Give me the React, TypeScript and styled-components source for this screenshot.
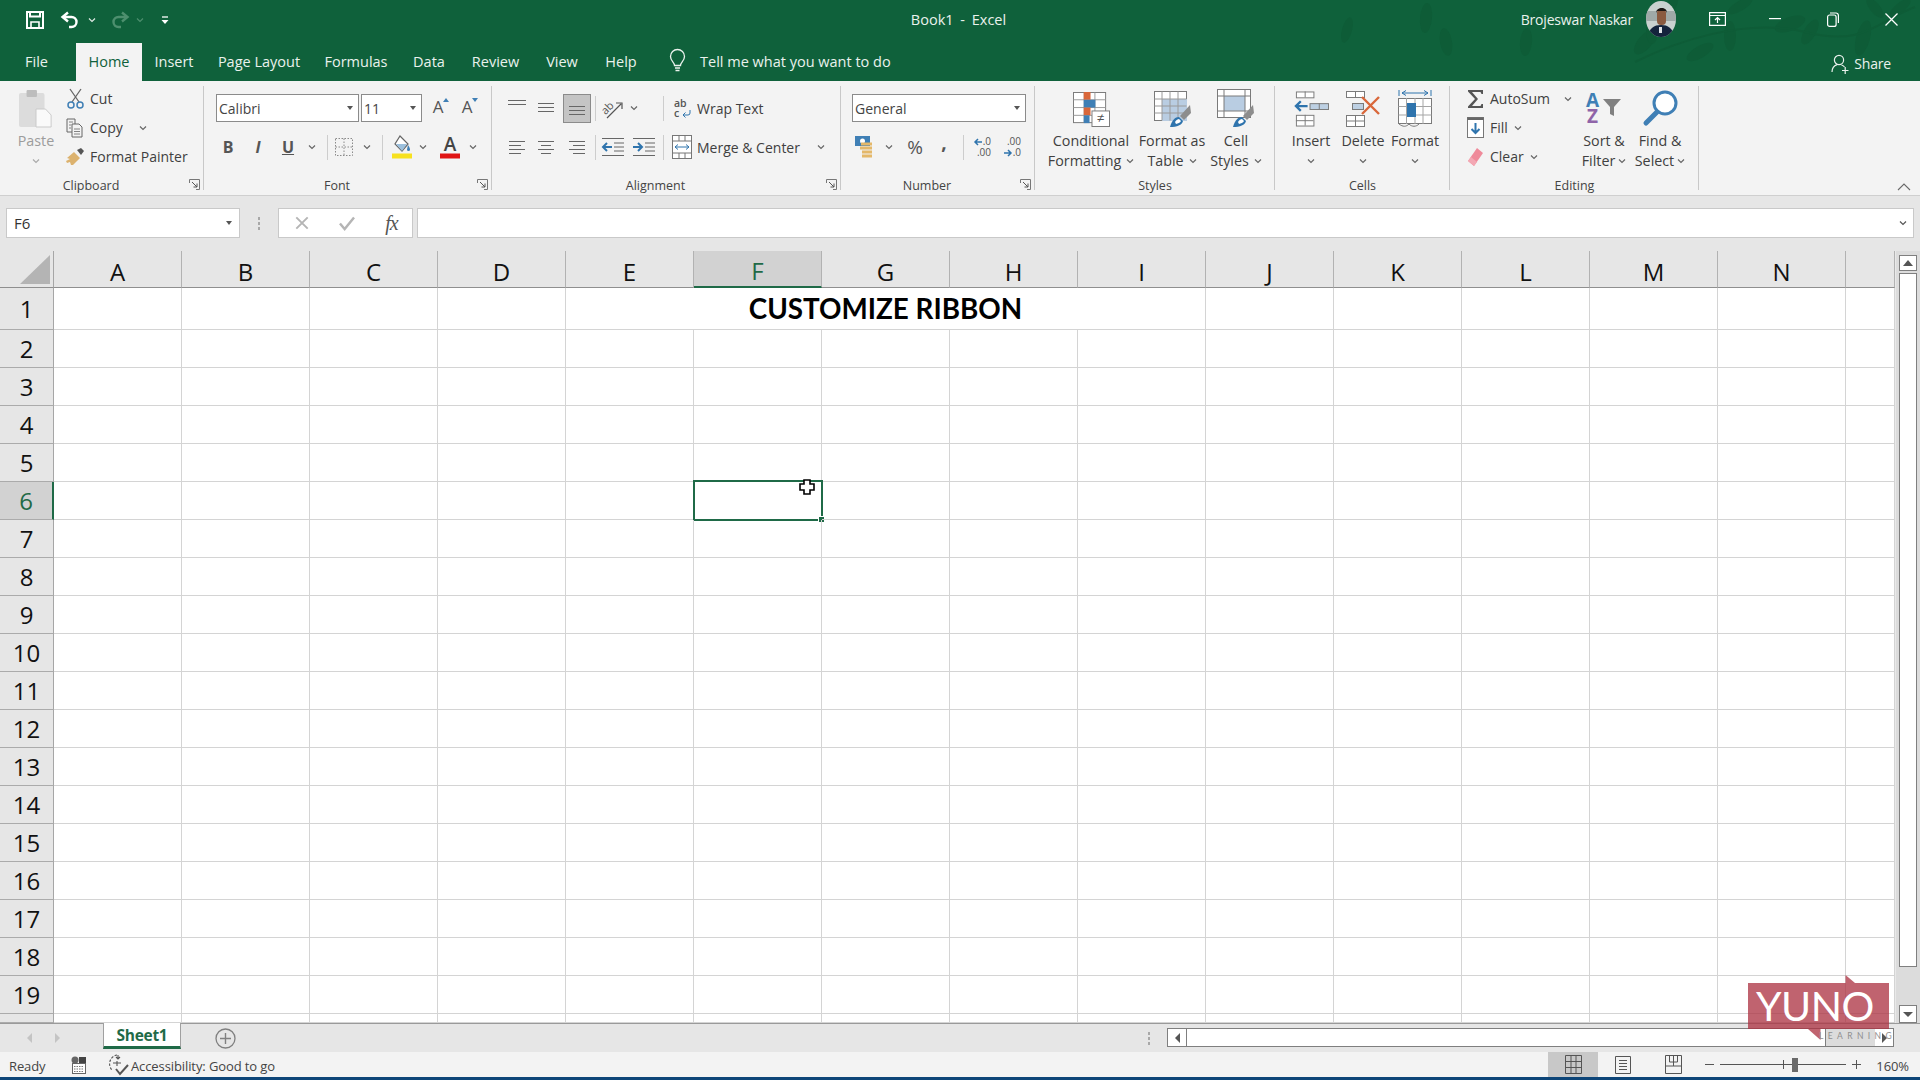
import React from 'react';
import styled, { createGlobalStyle } from 'styled-components';

const UI = `'Open Sans','Noto Sans',sans-serif`;
const GREEN = '#0f613b';
const TEXT = '#404040';

const Global = createGlobalStyle`
  html, body { margin: 0; width: 1920px; height: 1080px; overflow: hidden; background: #fff; }
  * { box-sizing: border-box; }
  svg { display: block; flex: none; overflow: visible; }
`;

const Window = styled.div`
  width: 1920px; height: 1080px; display: flex; flex-direction: column; overflow: hidden;
  font-family: ${UI}; font-size: 14px; color: ${TEXT}; position: relative;
`;
const Slot = styled.div<{ $w: number; $ml?: number }>`
  width: ${p => p.$w}px; margin-left: ${p => p.$ml || 0}px; flex: none;
  display: flex; align-items: center; justify-content: center; height: 100%;
`;
const TitleBar = styled.header`
  height: 43px; background: ${GREEN}; color: #fff; display: grid; grid-template-columns: 1fr auto 1fr;
  align-items: center; position: relative;
`;
const Leaves = styled.svg`position: absolute; left: 1300px; top: 0;`;
const Qat = styled.div`display: flex; height: 100%; padding: 0 0 3px 24px; align-items: center;`;
const DocTitle = styled.div`font-size: 14.5px; word-spacing: 3px; margin: 0 0 4px -3px; color: #eaf2ed; z-index: 1;`;
const WinArea = styled.div`display: flex; align-items: center; height: 100%; justify-content: flex-end; padding: 0 0 5px 0; z-index: 1;`;
const UserName = styled.span`font-size: 14px; letter-spacing: -.17px; color: #eaf2ed; margin-right: 13px;`;
const TabRow = styled.nav`height: 38px; background: ${GREEN}; display: flex; align-items: stretch;`;
const Tab = styled.div<{ $w: number; $active?: boolean; $ml?: number }>`
  width: ${p => p.$w}px; margin-left: ${p => p.$ml || 0}px; display: flex; align-items: center; justify-content: center;
  font-size: 14.5px; padding-bottom: 2px;
  background: ${p => (p.$active ? '#f3f3f3' : 'transparent')}; color: ${p => (p.$active ? GREEN : '#eaf2ed')};
`;
const TellMe = styled.div`display: flex; align-items: center; margin-left: 18px; gap: 14px; color: #eaf2ed; font-size: 14.5px; padding-bottom: 2px;`;
const Share = styled.div`display: flex; align-items: center; margin: 3px 29px 0 auto; gap: 5px; color: #eaf2ed; font-size: 14px; letter-spacing: -.2px;`;

const Ribbon = styled.section`height: 115px; background: #f3f3f3; border-bottom: 1px solid #cfcfcf; display: flex; position: relative;`;
const Group = styled.div<{ $w: number }>`
  width: ${p => p.$w}px; display: flex; flex-direction: column; position: relative; flex: none;
  &::after { content: ''; position: absolute; right: 0; top: 5px; bottom: 5px; width: 1px; background: #c8c8c8; }
`;
const GroupBody = styled.div<{ $pl?: number }>`flex: 1; display: flex; padding-left: ${p => p.$pl || 0}px; min-height: 0;`;
const GroupLabel = styled.div<{ $launcher?: boolean }>`
  height: 19px; display: flex; align-items: center; justify-content: center; font-size: 12.5px; color: #444;
  padding-right: ${p => (p.$launcher ? 22 : 0)}px;
`;
const LauncherBox = styled.div`position: absolute; right: 4px; bottom: 5px;`;
const Collapse = styled.div`position: absolute; left: 1897px; top: 102px;`;
const Stack = styled.div<{ $ml?: number }>`display: flex; flex-direction: column; padding-top: 3px; margin-left: ${p => p.$ml || 0}px;`;
const SmallBtn = styled.div<{ $w?: number }>`display: flex; align-items: center; height: 29px; font-size: 14px; white-space: nowrap; ${p => (p.$w ? `width:${p.$w}px;` : '')}`;
const SmallIcon = styled.div`width: 22px; display: flex; justify-content: center; margin-right: 4px;`;
const ChevWrap = styled.span<{ $ml?: number }>`display: inline-flex; margin-left: ${p => p.$ml ?? 6}px; vertical-align: middle;`;
const Rows = styled.div<{ $pl: number }>`display: flex; flex-direction: column; gap: 11px; padding: 13px 0 0 ${p => p.$pl}px;`;
const Row = styled.div`display: flex; align-items: center; height: 28px;`;
const Select = styled.div<{ $w: number; $ml?: number }>`
  width: ${p => p.$w}px; margin-left: ${p => p.$ml || 0}px; height: 28px; background: #fff; border: 1px solid #8b8b8b; position: relative; flex: none;
  font-size: 14px; display: flex; align-items: center; padding-left: 2px; justify-content: space-between; padding-right: 5px; color: #444;
`;
const Caret = styled.i`width: 0; height: 0; border-left: 3.5px solid transparent; border-right: 3.5px solid transparent; border-top: 4px solid #555;`;
const Sep = styled.div`width: 1px; height: 25px; background: #cdcdcd;`;
const Active = styled.div`width: 28px; height: 29px; background: #c4c4c4; border: 1px solid #8b8b8b; display: flex; align-items: center; justify-content: center;`;
const Letter = styled.span<{ $b?: boolean; $i?: boolean; $u?: boolean; $s?: number; $c?: string; $y?: number }>`
  font-size: ${p => p.$s || 16}px; font-weight: ${p => (p.$b ? 700 : 400)}; font-style: ${p => (p.$i ? 'italic' : 'normal')};
  text-decoration: ${p => (p.$u ? 'underline' : 'none')}; color: ${p => p.$c || '#555'}; line-height: 1;
  transform: translateY(${p => p.$y || 0}px);
`;
const LetterIcon = styled.div`display: flex; align-items: flex-start; height: 20px;`;
const Big = styled.div<{ $w: number }>`width: ${p => p.$w}px; flex: none; display: flex; flex-direction: column; align-items: center; padding-top: 3px;`;
const BigIcon = styled.div`height: 47px; display: flex; align-items: flex-end; justify-content: center; padding-bottom: 4px;`;
const BigText = styled.div<{ $dim?: boolean }>`
  line-height: 20px; height: 20px; font-size: 14.3px; white-space: nowrap; text-align: center; display: flex; align-items: center;
  color: ${p => (p.$dim ? '#9c9c9c' : TEXT)};
`;

const FormulaBar = styled.div`height: 55px; background: #e6e6e6; display: flex; padding: 12px 6px 0 6px; align-items: flex-start;`;
const FieldBox = styled.div<{ $w?: number; $end?: boolean }>`
  height: 30px; background: #fff; border: 1px solid #c9c9c9; display: flex; align-items: center; ${p => (p.$w ? `width:${p.$w}px;flex:none;` : 'flex:1;margin-left:4px;')}
  ${p => (p.$end ? 'justify-content:flex-end;padding-right:6px;' : '')}
`;
const NameText = styled.span`font-size: 15px; margin-left: 7px; flex: 1; color: #333;`;
const Dots = styled.div`width: 38px; flex: none; height: 30px; display: flex; align-items: center; justify-content: center; flex-direction: column; gap: 2px;`;
const Fx = styled.span`font-family: 'Liberation Serif', serif; font-style: italic; font-size: 20px; color: #555; letter-spacing: -1px;`;

const Body = styled.div`height: 772px; display: flex;`;
const Sheet = styled.div`
  width: 1895px; display: grid; flex: none; background: #fff;
  grid-template-columns: 54px repeat(14, 128px) 1fr;
  grid-template-rows: 37px 42px repeat(18, 38px) 9px;
`;
const Corner = styled.div`background: #e6e6e6; border-right: 1px solid #a6a6a6; border-bottom: 1px solid #8f8f8f; display: flex; justify-content: flex-end; align-items: flex-end; padding: 0 3px 3px 0;`;
const ColHead = styled.div<{ $on?: boolean }>`
  background: ${p => (p.$on ? '#d2d2d2' : '#e6e6e6')}; color: ${p => (p.$on ? '#1f6a47' : '#111')};
  border-right: 1px solid #b2b2b2; border-bottom: ${p => (p.$on ? '2px solid #1f6a47' : '1px solid #8f8f8f')};
  display: flex; align-items: center; justify-content: center; font-size: 24px; line-height: 1; padding-top: 5px;
`;
const RowHead = styled.div<{ $on?: boolean }>`
  background: ${p => (p.$on ? '#d2d2d2' : '#e6e6e6')}; color: ${p => (p.$on ? '#1f6a47' : '#111')};
  border-right: ${p => (p.$on ? '2px solid #1f6a47' : '1px solid #a6a6a6')}; border-bottom: 1px solid #ababab;
  display: flex; align-items: center; justify-content: center; font-size: 24px; line-height: 1; padding-top: 1px;
`;
const Cell = styled.div<{ $span?: number }>`
  border-right: 1px solid #d4d4d4; border-bottom: 1px solid #d4d4d4; position: relative; min-width: 0;
  ${p => (p.$span ? `grid-column: span ${p.$span}; display:flex; align-items:center; justify-content:center; padding-top:1px;` : '')}
`;
const Heading = styled.span`font-family: Lato, 'Open Sans', sans-serif; font-weight: 700; font-size: 27.8px; color: #000; line-height: 1; white-space: nowrap;`;
const Selection = styled.div`position: absolute; left: -1.5px; top: -2px; right: -1.5px; bottom: -2px; border: 2px solid #1f6a47;`;
const Handle = styled.i`position: absolute; right: -4px; bottom: -4px; width: 7px; height: 7px; background: #1f6a47; border: 1px solid #fff;`;
const Pointer = styled.div`position: absolute; left: 105px; top: -3px; z-index: 2;`;

const VScroll = styled.div`flex: 1; background: #dcdcdc; display: flex; flex-direction: column; padding: 4px 3px 0 3px; border-left: 1px solid #e9e9e9;`;
const ScrollBtn = styled.div<{ $mt?: number; $h?: number }>`
  background: #fff; border: 1px solid #7f7f7f; display: flex; align-items: center; justify-content: center;
  height: ${p => p.$h}px; margin-top: ${p => p.$mt || 0}px; flex: none;
`;

const TabBar = styled.div`height: 29px; background: #e6e6e6; border-top: 1px solid #9a9a9a; display: flex; flex: none;`;
const Nav = styled.div`width: 103px; flex: none; display: flex; align-items: center; padding: 0 0 0 26px; gap: 21px;`;
const SheetTab = styled.div`
  width: 78px; flex: none; height: 26px; background: #fff; border-left: 1px solid #a0a0a0; border-right: 1px solid #a0a0a0; border-bottom: 3px solid #1f6a47;
  margin-top: -1px; font-weight: 700; font-size: 15.5px; letter-spacing: -.3px; color: #1f6a47; display: flex; align-items: center; justify-content: center;
`;
const HScroll = styled.div`
  position: relative; margin: 4px 26px 0 0; width: 727px; height: 19px; border: 1px solid #7f7f7f; background: #dcdcdc; display: flex; flex: none;
`;
const HEnd = styled.div`width: 18px; flex: none; background: #fff; display: flex; align-items: center; justify-content: center;`;
const HThumb = styled.div`width: 640px; flex: none; background: #fff; border-left: 1px solid #7f7f7f; border-right: 1px solid #7f7f7f;`;
const Spacer = styled.div`flex: 1;`;
const Grips = styled.div`width: 10px; margin-right: 13px; margin-top: 8px; display: flex; flex-direction: column; align-items: center; gap: 2px;`;
const Grip = styled.i`width: 2px; height: 3px; background: #a8a8a8; display: block;`;

const Status = styled.footer`height: 25px; background: #f3f3f3; display: flex; align-items: center; font-size: 13px; letter-spacing: -.1px; flex: none; color: #444;`;
const StatusText = styled.span<{ $ml: number; $w?: number }>`margin-left: ${p => p.$ml}px; padding-top: 2px; ${p => (p.$w ? `width:${p.$w}px;` : '')}`;
const Strip = styled.div`height: 3px; background: #0d4578; flex: none;`;
const ViewBtn = styled.div<{ $on?: boolean }>`width: 50px; height: 100%; display: flex; align-items: center; justify-content: center; background: ${p => (p.$on ? '#c8c8c8' : 'transparent')};`;
const Slider = styled.div`width: 126px; height: 100%; position: relative; display: flex; align-items: center;`;
const SliderLine = styled.div`height: 1px; background: #555; width: 100%;`;
const SliderTick = styled.i`position: absolute; left: 63px; top: 8px; width: 1px; height: 9px; background: #555;`;
const SliderThumb = styled.i`position: absolute; left: 72px; top: 6px; width: 6px; height: 14px; background: #6a6a6a;`;
const Pct = styled.span`margin-left: 9px; margin-right: 11px; font-size: 13px; padding-top: 2px;`;

const Logo = styled.div`position: absolute; left: 1745px; top: 972px; width: 150px; height: 72px; z-index: 5; pointer-events: none;`;
const LogoWord = styled.div`position: absolute; left: 11px; top: 12px; color: #fff; font-family: Lato, sans-serif; font-size: 41px; letter-spacing: -.5px; line-height: 44px; white-space: nowrap;`;
const LogoSub = styled.div`position: absolute; left: 74px; top: 59px; color: #8f8f8f; font-family: Lato, sans-serif; font-size: 8.5px; letter-spacing: 4.4px; white-space: nowrap;`;

/* ---------- drawings ---------- */
const Chev: React.FC<{ c?: string }> = ({ c = '#666' }) => (
  <svg width="8" height="6" viewBox="0 0 8 6"><path d="M1 1.5 4 4.5 7 1.5" stroke={c} strokeWidth="1.2" fill="none" /></svg>
);
const Launcher = () => (
  <svg width="11" height="11" viewBox="0 0 11 11" fill="none"><path d="M.5 4V.5h10v10H7" stroke="#777" /><path d="M3 3l5 5M8 4.5V8H4.5" stroke="#555" /></svg>
);
const W = '#fff';
const Save = () => (<svg width="18" height="18" viewBox="0 0 18 18" fill="none" stroke={W} strokeWidth="2"><path d="M1 1h16v16H1z" /><path d="M4 1v4.5h10V1" /><path d="M5 17v-6h8v6" strokeWidth="1.6" /></svg>);
const Undo = ({ c = W }: { c?: string }) => (<svg width="20" height="18" viewBox="0 0 20 18" fill="none" stroke={c} strokeWidth="2.4"><path d="M8 1.5 2.5 6 8 10.5" /><path d="M3 6h8.5a4.6 4.6 0 0 1 0 10H9" /></svg>);
const Redo = () => (<svg width="20" height="18" viewBox="0 0 20 18" fill="none" stroke="#4d8f6e" strokeWidth="2.4"><path d="M12 1.5 17.5 6 12 10.5" /><path d="M17 6H8.5a4.6 4.6 0 0 0 0 10H11" /></svg>);
const Custom = () => (<svg width="8" height="9" viewBox="0 0 8 9"><path d="M1 1h6" stroke={W} strokeWidth="1.3" /><path d="M.5 4h7L4 8z" fill={W} /></svg>);
const LeavesArt = () => (
  <Leaves width="620" height="81" viewBox="0 0 620 81" fill="#0e5c37">
    {[[47, 30, 5, 13, 15], [126, 18, 6, 15, 5], [146, 42, 6, 14, -10], [226, 42, 6, 14, 5], [235, 18, 5, 9, 40], [345, 42, 7, 15, 40], [352, 30, 6, 14, 0], [400, 52, 6, 15, 60], [430, 36, 6, 15, 0], [490, 24, 7, 16, 70], [510, 32, 6, 14, 30], [563, 38, 7, 18, 15], [600, 8, 5, 13, 50], [575, 8, 5, 12, -40], [440, 6, 5, 14, 60], [370, 8, 5, 14, 30]].map(([x, y, a, b, r], i) => (
      <ellipse key={i} cx={x} cy={y} rx={a} ry={b} transform={`rotate(${r} ${x} ${y})`} />
    ))}
    <path d="M335 62c40-20 110-45 170-30s70-10 110-25" stroke="#0e5c37" strokeWidth="2" fill="none" />
  </Leaves>
);
const Avatar = () => (
  <svg width="30" height="36" viewBox="0 0 30 36">
    <defs><clipPath id="av"><ellipse cx="15" cy="18" rx="15" ry="18" /></clipPath></defs>
    <g clipPath="url(#av)">
      <rect width="30" height="36" fill="#c9d1cf" />
      <rect y="10" width="30" height="10" fill="#9fa9a8" />
      <path d="M2 36c1-9 6-12 13-12s12 3 13 12z" fill="#14233c" />
      <rect x="11" y="8" width="9" height="16" rx="4" fill="#8a5a40" />
      <path d="M10 12c0-6 11-7 11 0l-1-2h-9z" fill="#1c1714" />
      <rect x="13" y="26" width="3" height="6" fill="#dfe3e6" />
    </g>
  </svg>
);
const Bulb = () => (<svg width="17" height="24" viewBox="0 0 17 24" fill="none" stroke="#eaf2ed" strokeWidth="1.3"><path d="M5.5 16.5c0-3-4-4.500-4-9a7 7 0 0 1 14 0c0 4.500-4 6-4 9z" /><path d="M6 19h5M6.500 21.500h4" /></svg>);
const Person = () => (<svg width="18" height="20" viewBox="0 0 18 20" fill="none" stroke="#eaf2ed" strokeWidth="1.2"><circle cx="8" cy="6" r="4.600" /><path d="M1 18c0-4 2.500-6.500 5-7.400M10.500 11c1.300.5 2.300 1 3 2M11 16.500h6.500M14.200 13v7" /></svg>);
const DispOpts = () => (<svg width="17" height="14" viewBox="0 0 17 14" fill="none" stroke="#fff" strokeWidth="1.200"><path d="M.6.6h15.800v12.800H.6zM.6 3.500h15.800" /><path d="M8.500 11V6M6 8l2.500-2.500L11 8" /></svg>);
const MinBtn = () => (<svg width="12" height="2"><rect width="12" height="1.200" fill="#fff" /></svg>);
const RestoreBtn = () => (<svg width="12" height="15" viewBox="0 0 12 15" fill="none" stroke="#fff" strokeWidth="1.200"><rect x=".6" y="3" width="8.500" height="11.400" rx="2" /><path d="M3 1h6a2.400 2.400 0 0 1 2.400 2.400V11" /></svg>);
const CloseBtn = () => (<svg width="13" height="13" viewBox="0 0 13 13" stroke="#fff" strokeWidth="1.300"><path d="M.5.500l12 12M12.500.500l-12 12" /></svg>);
const PasteIcon = () => (
  <svg width="34" height="38" viewBox="0 0 36 38" fill="none" preserveAspectRatio="none">
    <rect x="0" y="4" width="27" height="34" rx="2" fill="#dcdcdc" />
    <rect x="8" y="1" width="11" height="7" rx="1" fill="#bdbdbd" />
    <path d="M18 20h10l6 6v12H18z" fill="#fafafa" stroke="#c9c9c9" />
  </svg>
);
const Cut = () => (
  <svg width="17" height="20" viewBox="0 0 17 20" fill="none">
    <path d="M3 0l9 13M14 0 5 13" stroke="#666" strokeWidth="1.300" />
    <circle cx="4" cy="16" r="3" stroke="#3f7fb5" strokeWidth="1.500" /><circle cx="13" cy="16" r="3" stroke="#3f7fb5" strokeWidth="1.500" />
  </svg>
);
const Copy = () => (
  <svg width="18" height="20" viewBox="0 0 18 20" fill="none" stroke="#666"><path d="M1 1h8v13H1z" /><path d="M6 6h7l3 3v10H6z" fill="#f3f3f3" /><path d="M3 4h4M3 7h2M3 10h2M8 11h6M8 13.500h6M8 16h6" strokeWidth=".8" /></svg>
);
const Painter = () => (
  <svg width="18" height="18" viewBox="0 0 18 18"><path d="M11 2l4-2 3 3-3 4z" fill="#555" /><path d="M8 4l6 6-3 3-4 4H5l-1-3-3 1-1-2 4-2-3-1z" fill="#dcb26e" /></svg>
);
const GrowA = ({ up }: { up?: boolean }) => (
  <LetterIcon>
    <Letter $s={17} $c="#555">A</Letter>
    <svg width="6" height="4" viewBox="0 0 6 4"><path d={up ? 'M0 4h6L3 0z' : 'M0 0h6L3 4z'} fill="#3f7fb5" /></svg>
  </LetterIcon>
);
const BordersIcon = () => (<svg width="18" height="18" viewBox="0 0 18 18" fill="none" stroke="#8a8a8a" strokeDasharray="1.500 1.500"><path d="M.5.500h17v17H.5zM9 .5v17M.5 9h17" /></svg>);
const FillIcon = () => (
  <svg width="20" height="24" viewBox="0 0 20 24" fill="none">
    <path d="M8 1l8 8-6 7-7-7z" fill="#fff" stroke="#666" strokeWidth="1.200" /><path d="M4 9h11l-5 7z" fill="#9cc0dd" /><path d="M16 10c1.500 2 2 3.500 2 4.500a1.500 1.500 0 0 1-3 0" fill="#3f7fb5" />
    <rect x="0" y="18.500" width="20" height="5" fill="#f7e11f" />
  </svg>
);
const ColorA = () => (
  <svg width="20" height="24" viewBox="0 0 20 24"><text x="10" y="16" textAnchor="middle" fontFamily="Open Sans, sans-serif" fontWeight="600" fontSize="19" fill="#444">A</text><rect y="18.500" width="20" height="5" fill="#e01414" /></svg>
);
const Lines = ({ l, w = 22, h = 20 }: { l: number[][]; w?: number; h?: number }) => (
  <svg width={w} height={h} viewBox={`0 0 ${w} ${h}`} stroke="#666" strokeWidth="1">
    {l.map(([a, b, y], i) => <path key={i} d={`M${a} ${y + .5}H${b}`} />)}
  </svg>
);
const Orient = () => (
  <svg width="22" height="22" viewBox="0 0 22 22" fill="none">
    <text transform="rotate(-45 8 12)" x="1" y="14" fontFamily="Open Sans, sans-serif" fontSize="11" fill="#555">ab</text>
    <path d="M6 21 20 7M15 6h6v6" stroke="#555" strokeWidth="1.200" />
  </svg>
);
const Indent = ({ right }: { right?: boolean }) => (
  <svg width="22" height="20" viewBox="0 0 22 20" fill="none">
    <path d="M0 1.500h22M0 18.500h22M12 6h10M12 10h10M12 14h10" stroke="#666" />
    <path d={right ? 'M0 10h8M5 6l4 4-4 4' : 'M10 10H2M5 6l-4 4 4 4'} stroke="#2f74ad" strokeWidth="2" />
  </svg>
);
const WrapIcon = () => (
  <svg width="18" height="20" viewBox="0 0 18 20">
    <text x="1" y="9" fontFamily="Open Sans, sans-serif" fontSize="10.500" fill="#555" fontWeight="600">ab</text>
    <text x="1" y="19" fontFamily="Open Sans, sans-serif" fontSize="10.500" fill="#555" fontWeight="600">c</text>
    <path d="M17 12v3a2 2 0 0 1-2 2H10M12.500 14.500 10 17l2.500 2.500" stroke="#2f74ad" fill="none" />
  </svg>
);
const MergeIcon = () => (
  <svg width="20" height="24" viewBox="0 0 20 24" fill="none">
    <rect x=".5" y=".5" width="19" height="23" fill="#fff" stroke="#777" /><path d="M.5 6h19M.5 18h19M7 .5V6M13 .5V6M7 18v5.500M13 18v5.500" stroke="#777" />
    <path d="M3 12h14M6 9.500 3 12l3 2.500M14 9.500l3 2.500-3 2.500" stroke="#2f74ad" />
  </svg>
);
const Accounting = () => (
  <svg width="20" height="24" viewBox="0 0 20 24">
    <rect x="0" y="1" width="15" height="10" fill="#3f7fb5" /><circle cx="7.500" cy="6" r="2.500" fill="#fff" />
    <path d="M6 9h11M5 13h12M7 17h10M7 21h10" stroke="#e4b86a" strokeWidth="3" />
  </svg>
);
const Dec = ({ a, b, left }: { a: string; b: string; left?: boolean }) => (
  <svg width="20" height="22" viewBox="0 0 20 22">
    <text x="19" y="9" textAnchor="end" fontFamily="Open Sans, sans-serif" fontSize="10" fill="#555">{a}</text>
    <text x="19" y="20" textAnchor="end" fontFamily="Open Sans, sans-serif" fontSize="10" fill="#555">{b}</text>
    <path d={left ? 'M10 6H3M6 3 3 6l3 3' : 'M2 17h7M6 14l3 3-3 3'} stroke="#2f74ad" strokeWidth="1.500" fill="none" />
  </svg>
);
const G = '#7a7a7a';
const CondIcon = () => (
  <svg width="37" height="35" viewBox="0 0 38 36" fill="none" preserveAspectRatio="none">
    <rect x=".5" y=".5" width="33" height="31" fill="#fff" stroke={G} /><path d="M.5 8h33M.5 16h33M.5 24h33M11.500 .5v31M22.500 .5v31" stroke="#9a9a9a" />
    <rect x="11" y="0" width="7" height="8" fill="#d9673a" /><rect x="11" y="8" width="12" height="8" fill="#3f7fb5" /><rect x="11" y="16" width="7" height="8" fill="#d9673a" /><rect x="11" y="24" width="6" height="8" fill="#3f7fb5" />
    <rect x="19.500" y="19.500" width="18" height="16" fill="#fff" stroke={G} />
    <text x="28.500" y="32" textAnchor="middle" fontFamily="Open Sans, sans-serif" fontSize="14" fill="#555">≠</text>
  </svg>
);
const Brush = ({ x, y }: { x: number; y: number }) => (
  <g transform={`translate(${x} ${y})`}>
    <path d="M0 17c2-7 5-10 9-10l4 4c-1 4-6 6-13 6z" fill="#2f74ad" /><path d="M5 12c1-2 3-3 4-3l2 2c-1 2-3 2-5 3z" fill="#fff" />
    <path d="M10 6l4 4 7-7-1-8z" fill="#8d8d8d" />
  </g>
);
const TableIcon = () => (
  <svg width="37" height="36" viewBox="0 0 37 36" fill="none">
    <rect x=".5" y=".5" width="32" height="29" fill="#fff" stroke={G} /><rect x="8" y="8" width="25" height="22" fill="#b9cde2" />
    <path d="M.5 8h32M.5 15h32M.5 22h32M8 .5v29M16 .5v29M24 .5v29" stroke="#9a9a9a" />
    <Brush x={16} y={19} />
  </svg>
);
const StylesIcon = () => (
  <svg width="38" height="38" viewBox="0 0 38 38" fill="none">
    <rect x=".5" y=".5" width="33" height="28" fill="#fff" stroke={G} /><rect x="7" y="7" width="21" height="15" fill="#b9cde2" />
    <path d="M.5 7h33M.5 22h33M7 .5v28M28 .5v28" stroke={G} />
    <Brush x={16} y={21} />
  </svg>
);
const Mini = ({ x, y, w, h, f = '#fff', rows = 1, cols = 2 }: { x: number; y: number; w: number; h: number; f?: string; rows?: number; cols?: number }) => (
  <g>
    <rect x={x + .5} y={y + .5} width={w} height={h} fill={f} stroke={G} />
    {Array.from({ length: cols - 1 }, (_, i) => <path key={i} d={`M${x + .5 + (w * (i + 1)) / cols} ${y}v${h}`} stroke={G} />)}
    {Array.from({ length: rows - 1 }, (_, i) => <path key={i} d={`M${x} ${y + .5 + (h * (i + 1)) / rows}h${w}`} stroke={G} />)}
  </g>
);
const InsertIcon = () => (
  <svg width="36" height="36" viewBox="0 0 37 36" fill="none">
    <Mini x={3} y={0} w={18} h={6} /><Mini x={17} y={12} w={19} h={6} f="#bdd0e3" /><Mini x={3} y={24} w={18} h={11} rows={2} />
    <path d="M15 15H3M8 10l-5 5 5 5" stroke="#2f74ad" strokeWidth="2.400" />
  </svg>
);
const DeleteIcon = () => (
  <svg width="36" height="36" viewBox="0 0 36 36" fill="none">
    <Mini x={1} y={0} w={18} h={6} /><Mini x={7} y={12} w={11} h={6} f="#bdd0e3" cols={1} /><Mini x={1} y={24} w={18} h={11} rows={2} />
    <path d="M17 6l17 17M34 6 17 23" stroke="#d9673a" strokeWidth="2.400" />
  </svg>
);
const FormatIcon = () => (
  <svg width="34" height="37" viewBox="0 0 34 37" fill="none">
    <path d="M1 0v6M33 0v6M4 3h26M8 .5 4 3l4 2.500M26 .5 30 3l-4 2.500" stroke="#2f74ad" />
    <rect x=".5" y="8.500" width="33" height="25" fill="#fff" stroke={G} /><path d="M.5 16.500h33M.5 25h33M8.500 8v26M25 8v26M17 8v26" stroke="#a5a5a5" />
    <rect x="9" y="13" width="9" height="14" fill="#2f74ad" />
    <path d="M1 34c4 3 7 3 10 0 3 3 7 3 10 0" stroke={G} />
  </svg>
);
const Sigma = () => (<svg width="17" height="20" viewBox="0 0 17 20"><path d="M1 1h15v4h-1.500L13.500 3H5l6 7-6 7h8.500l1-2H16v4H1v-1.500L8 10 1 2.500z" fill="#555" /></svg>);
const FillDown = () => (<svg width="17" height="21" viewBox="0 0 17 21" fill="none"><rect x=".5" y=".5" width="16" height="20" fill="#fff" stroke="#777" /><rect x=".5" y=".5" width="16" height="2.500" fill="#666" /><path d="M8.500 6v10M4.500 12l4 4 4-4" stroke="#2f74ad" strokeWidth="2" /></svg>);
const Eraser = () => (<svg width="18" height="20" viewBox="0 0 18 20"><path d="M11 1l6 5-9 13-6-5z" fill="#ef8a9a" /><path d="M5 10l6 5-3 4-6-5z" fill="#f3a7b3" /></svg>);
const SortIcon = () => (
  <svg width="36" height="35" viewBox="0 0 36 35">
    <text x="0" y="15" fontFamily="Open Sans, sans-serif" fontWeight="700" fontSize="19" fill="#3f7fb5">A</text>
    <text x="1" y="31" fontFamily="Open Sans, sans-serif" fontWeight="700" fontSize="19" fill="#8f64a8">Z</text>
    <path d="M17 7h18l-7 8v9l-4-2v-7z" fill="#808080" />
  </svg>
);
const FindIcon = () => (
  <svg width="35" height="37" viewBox="0 0 35 37" fill="none"><circle cx="22" cy="13" r="11" stroke="#3f7fb5" strokeWidth="3" fill="#fff" /><path d="M14 22 3 33" stroke="#3f7fb5" strokeWidth="5" strokeLinecap="round" /></svg>
);
const Up = ({ c = '#6a6a6a' }: { c?: string }) => (<svg width="14" height="8" viewBox="0 0 14 8"><path d="M1 7 7 1l6 6" stroke={c} strokeWidth="1.100" fill="none" /></svg>);
const Tri = ({ d, c = '#555' }: { d: 'l' | 'r' | 'u' | 'd'; c?: string }) => {
  const p = { l: 'M6 0v10L1 5z', r: 'M1 0v10l5-5z', u: 'M0 7h10L5 1z', d: 'M0 2h10L5 7z' }[d];
  return <svg width={d === 'l' || d === 'r' ? 7 : 10} height={d === 'l' || d === 'r' ? 10 : 8} viewBox={d === 'l' || d === 'r' ? '0 0 7 10' : '0 0 10 8'}><path d={p} fill={c} /></svg>;
};
const CornerTri = () => (<svg width="30" height="29" viewBox="0 0 30 29"><path d="M30 0v29H0z" fill="#b4b4b4" /></svg>);
const CrossCursor = () => (<svg width="16" height="16" viewBox="0 0 16 16"><path d="M5 1h6v4h4v6h-4v4H5v-4H1V5h4z" fill="#fff" stroke="#000" strokeWidth="1.600" /></svg>);
const Plus = () => (<svg width="21" height="21" viewBox="0 0 21 21" fill="none" stroke="#808080"><circle cx="10.500" cy="10.500" r="9.500" strokeWidth="1.300" /><path d="M10.500 5v11M5 10.500h11" strokeWidth="1.400" /></svg>);
const CancelX = () => (<svg width="14" height="14" viewBox="0 0 16 16" stroke="#b5b5b5" strokeWidth="2.200"><path d="M1.500 1.500l13 13M14.500 1.500l-13 13" /></svg>);
const CheckMk = () => (<svg width="18" height="15" viewBox="0 0 18 16" fill="none" stroke="#b5b5b5" strokeWidth="2.600"><path d="M1.500 8 6.500 14 16.500 1.500" /></svg>);
const Macro = () => (<svg width="16" height="18" viewBox="0 0 16 18" fill="none"><circle cx="4" cy="4" r="3.500" fill="#666" /><rect x="8" y="1" width="7" height="6" fill="#444" /><rect x="1.500" y="7.500" width="13" height="10" fill="#fff" stroke="#666" /><path d="M3 10.500h10M3 13h10M3 15.500h10" stroke="#777" strokeDasharray="1.500 1" /></svg>);
const A11yIcon = () => (<svg width="20" height="22" viewBox="0 0 20 22" fill="none" stroke="#555" strokeWidth="1.100"><path d="M8 1a9 9 0 0 0-5 15" strokeDasharray="2.500 1.500" /><path d="M9 1v4M7 3l2 2 2-2M4 9h8M8 7v5" /><path d="M7 15l4 5 8-9" strokeWidth="2" /></svg>);
const NormalView = () => (<svg width="17" height="19" viewBox="0 0 17 19" fill="none" stroke="#555"><path d="M.5.500h16v18H.5zM.5 6.500h16M.5 12.500h16M6 .5v18M11 .5v18" /></svg>);
const LayoutView = () => (<svg width="16" height="18" viewBox="0 0 16 18" fill="none" stroke="#555"><path d="M.5.500h15v17H.5z" /><path d="M4 4.500h8M4 7.500h8M4 10.500h8M4 13.500h8" /></svg>);
const BreakView = () => (<svg width="17" height="19" viewBox="0 0 17 19" fill="none" stroke="#555"><path d="M.5.500h16v18H.5zM.5 11h16M8.500.5V11M4.500 .5V7h8V.5" /></svg>);
const ZoomSign = ({ plus }: { plus?: boolean }) => (<svg width="9" height="9" viewBox="0 0 9 9" stroke="#555"><path d="M0 4.500h9" />{plus && <path d="M4.500 0v9" />}</svg>);
const LogoShape = () => (
  <svg width="150" height="72" viewBox="0 0 150 72"><path d="M3 11h97.500V3L110 11h34v46H75.500v11L63 57H3z" fill="rgba(172,50,66,.76)" /></svg>
);

const COLS = 'ABCDEFGHIJKLMN'.split('');
const ROWS = Array.from({ length: 20 }, (_, i) => i + 1);

const Cells: React.FC<{ row: number }> = ({ row }) => {
  if (row === 1) {
    return (
      <>
        {[0, 1, 2, 3].map(i => <Cell key={i} />)}
        <Cell $span={5}><Heading>CUSTOMIZE RIBBON</Heading></Cell>
        {[0, 1, 2, 3, 4, 5].map(i => <Cell key={i + 9} />)}
      </>
    );
  }
  return (
    <>
      {Array.from({ length: 15 }, (_, i) => (
        <Cell key={i}>
          {row === 6 && i === 5 && (
            <>
              <Selection><Handle /></Selection>
              <Pointer><CrossCursor /></Pointer>
            </>
          )}
        </Cell>
      ))}
    </>
  );
};

const BigBtn: React.FC<{ w: number; icon: React.ReactNode; l1: string; l2?: string; dim?: boolean; chevMl?: number }> = ({ w, icon, l1, l2, dim, chevMl }) => (
  <Big $w={w}>
    <BigIcon>{icon}</BigIcon>
    <BigText $dim={dim}>{l1}</BigText>
    <BigText $dim={dim}>{l2}<ChevWrap $ml={l2 ? chevMl ?? 5 : 0}><Chev c={dim ? '#aaa' : '#666'} /></ChevWrap></BigText>
  </Big>
);

export default function App() {
  return (
    <Window>
      <Global />
      <TitleBar>
        <LeavesArt />
        <Qat>
          <Slot $w={22}><Save /></Slot>
          <Slot $w={22} $ml={13}><Undo /></Slot>
          <Slot $w={10} $ml={6}><Chev c="#dfeae4" /></Slot>
          <Slot $w={22} $ml={12}><Redo /></Slot>
          <Slot $w={10} $ml={4}><Chev c="#4d8f6e" /></Slot>
          <Slot $w={10} $ml={15}><Custom /></Slot>
        </Qat>
        <DocTitle>Book1 - Excel</DocTitle>
        <WinArea>
          <UserName>Brojeswar Naskar</UserName>
          <Avatar />
          <Slot $w={58} $ml={12}><DispOpts /></Slot>
          <Slot $w={58}><MinBtn /></Slot>
          <Slot $w={58}><RestoreBtn /></Slot>
          <Slot $w={58}><CloseBtn /></Slot>
        </WinArea>
      </TitleBar>
      <TabRow>
        <Tab $w={73}>File</Tab>
        <Tab $w={66} $ml={3} $active>Home</Tab>
        <Tab $w={64}>Insert</Tab>
        <Tab $w={106}>Page Layout</Tab>
        <Tab $w={88}>Formulas</Tab>
        <Tab $w={58}>Data</Tab>
        <Tab $w={75}>Review</Tab>
        <Tab $w={58}>View</Tab>
        <Tab $w={60}>Help</Tab>
        <TellMe><Bulb />Tell me what you want to do</TellMe>
        <Share><Person />Share</Share>
      </TabRow>
      <Ribbon>
        <Group $w={204}>
          <GroupBody $pl={11}>
            <BigBtn w={50} dim icon={<PasteIcon />} l1="Paste" />
            <Stack $ml={3}>
              <SmallBtn><SmallIcon><Cut /></SmallIcon>Cut</SmallBtn>
              <SmallBtn><SmallIcon><Copy /></SmallIcon>Copy<ChevWrap $ml={16}><Chev /></ChevWrap></SmallBtn>
              <SmallBtn><SmallIcon><Painter /></SmallIcon>Format Painter</SmallBtn>
            </Stack>
          </GroupBody>
          <GroupLabel $launcher>Clipboard</GroupLabel>
          <LauncherBox><Launcher /></LauncherBox>
        </Group>
        <Group $w={288}>
          <GroupBody>
            <Rows $pl={12}>
              <Row>
                <Select $w={143}>Calibri<Caret /></Select>
                <Select $w={61} $ml={2}>11<Caret /></Select>
                <Slot $w={30} $ml={4}><GrowA up /></Slot>
                <Slot $w={28}><GrowA /></Slot>
              </Row>
              <Row>
                <Slot $w={24}><Letter $b>B</Letter></Slot>
                <Slot $w={36}><Letter $b $i>I</Letter></Slot>
                <Slot $w={24}><Letter $b $u>U</Letter></Slot>
                <Slot $w={24}><Chev /></Slot>
                <Slot $w={6}><Sep /></Slot>
                <Slot $w={28}><BordersIcon /></Slot>
                <Slot $w={18}><Chev /></Slot>
                <Slot $w={12}><Sep /></Slot>
                <Slot $w={28}><FillIcon /></Slot>
                <Slot $w={14}><Chev /></Slot>
                <Slot $w={40}><ColorA /></Slot>
                <Slot $w={6}><Chev /></Slot>
              </Row>
            </Rows>
          </GroupBody>
          <GroupLabel $launcher>Font</GroupLabel>
          <LauncherBox><Launcher /></LauncherBox>
        </Group>
        <Group $w={349}>
          <GroupBody>
            <Rows $pl={11}>
              <Row>
                <Slot $w={28}><Lines l={[[2, 20, 2], [2, 20, 6]]} /></Slot>
                <Slot $w={30}><Lines l={[[3, 19, 5], [3, 19, 9], [3, 19, 13]]} /></Slot>
                <Slot $w={31}><Active><Lines l={[[3, 19, 8], [3, 19, 12], [3, 19, 16]]} /></Active></Slot>
                <Slot $w={6}><Sep /></Slot>
                <Slot $w={28}><Orient /></Slot>
                <Slot $w={16}><Chev /></Slot>
                <Slot $w={17} />
                <Slot $w={8}><Sep /></Slot>
                <Slot $w={30}><WrapIcon /></Slot>
                <SmallBtn>Wrap Text</SmallBtn>
              </Row>
              <Row>
                <Slot $w={28}><Lines l={[[3, 19, 4], [3, 15, 8], [3, 19, 12], [3, 15, 16]]} /></Slot>
                <Slot $w={30}><Lines l={[[3, 19, 4], [6, 16, 8], [3, 19, 12], [6, 16, 16]]} /></Slot>
                <Slot $w={31}><Lines l={[[3, 19, 4], [7, 19, 8], [3, 19, 12], [7, 19, 16]]} /></Slot>
                <Slot $w={6}><Sep /></Slot>
                <Slot $w={30}><Indent /></Slot>
                <Slot $w={31}><Indent right /></Slot>
                <Slot $w={8}><Sep /></Slot>
                <Slot $w={30}><MergeIcon /></Slot>
                <SmallBtn>Merge &amp; Center<ChevWrap $ml={17}><Chev /></ChevWrap></SmallBtn>
              </Row>
            </Rows>
          </GroupBody>
          <GroupLabel $launcher>Alignment</GroupLabel>
          <LauncherBox><Launcher /></LauncherBox>
        </Group>
        <Group $w={194}>
          <GroupBody>
            <Rows $pl={11}>
              <Row><Select $w={174}>General<Caret /></Select></Row>
              <Row>
                <Slot $w={26}><Accounting /></Slot>
                <Slot $w={22}><Chev /></Slot>
                <Slot $w={30}><Letter $s={19}>%</Letter></Slot>
                <Slot $w={28}><Letter $s={19} $b $y={-5}>,</Letter></Slot>
                <Slot $w={10}><Sep /></Slot>
                <Slot $w={28}><Dec a=".0" b=".00" left /></Slot>
                <Slot $w={32}><Dec a=".00" b=".0" /></Slot>
              </Row>
            </Rows>
          </GroupBody>
          <GroupLabel $launcher>Number</GroupLabel>
          <LauncherBox><Launcher /></LauncherBox>
        </Group>
        <Group $w={240}>
          <GroupBody $pl={11}>
            <BigBtn w={90} icon={<CondIcon />} l1="Conditional" l2="Formatting" />
            <BigBtn w={72} icon={<TableIcon />} l1="Format as" l2="Table" />
            <BigBtn w={56} icon={<StylesIcon />} l1="Cell" l2="Styles" />
          </GroupBody>
          <GroupLabel>Styles</GroupLabel>
        </Group>
        <Group $w={175}>
          <GroupBody $pl={10}>
            <BigBtn w={52} icon={<InsertIcon />} l1="Insert" />
            <BigBtn w={52} icon={<DeleteIcon />} l1="Delete" />
            <BigBtn w={52} icon={<FormatIcon />} l1="Format" />
          </GroupBody>
          <GroupLabel>Cells</GroupLabel>
        </Group>
        <Group $w={249}>
          <GroupBody $pl={14}>
            <Stack>
              <SmallBtn $w={112}><SmallIcon><Sigma /></SmallIcon>AutoSum<ChevWrap $ml={14}><Chev /></ChevWrap></SmallBtn>
              <SmallBtn $w={112}><SmallIcon><FillDown /></SmallIcon>Fill<ChevWrap $ml={6}><Chev /></ChevWrap></SmallBtn>
              <SmallBtn $w={112}><SmallIcon><Eraser /></SmallIcon>Clear<ChevWrap $ml={6}><Chev /></ChevWrap></SmallBtn>
            </Stack>
            <BigBtn w={56} icon={<SortIcon />} l1="Sort &" l2="Filter" chevMl={3} />
            <BigBtn w={56} icon={<FindIcon />} l1="Find &" l2="Select" chevMl={3} />
          </GroupBody>
          <GroupLabel>Editing</GroupLabel>
        </Group>
        <Collapse><Up /></Collapse>
      </Ribbon>
      <FormulaBar>
        <FieldBox $w={234}><NameText>F6</NameText><Slot $w={20}><Caret /></Slot></FieldBox>
        <Dots><Grip /><Grip /><Grip /></Dots>
        <FieldBox $w={135}>
          <Slot $w={45}><CancelX /></Slot>
          <Slot $w={45}><CheckMk /></Slot>
          <Slot $w={45}><Fx>fx</Fx></Slot>
        </FieldBox>
        <FieldBox $end><Chev c="#555" /></FieldBox>
      </FormulaBar>
      <Body>
        <Sheet>
          <Corner><CornerTri /></Corner>
          {COLS.map(c => <ColHead key={c} $on={c === 'F'}>{c}</ColHead>)}
          <ColHead />
          {ROWS.map(r => (
            <React.Fragment key={r}>
              <RowHead $on={r === 6}>{r < 20 ? r : ''}</RowHead>
              <Cells row={r} />
            </React.Fragment>
          ))}
        </Sheet>
        <VScroll>
          <ScrollBtn $h={16}><Tri d="u" /></ScrollBtn>
          <ScrollBtn $h={694} $mt={2} />
          <ScrollBtn $h={18} $mt={38}><Tri d="d" /></ScrollBtn>
        </VScroll>
      </Body>
      <TabBar>
        <Nav><Tri d="l" c="#c4c4c4" /><Tri d="r" c="#c4c4c4" /></Nav>
        <SheetTab>Sheet1</SheetTab>
        <Slot $w={21} $ml={34}><Plus /></Slot>
        <Spacer />
        <Grips><Grip /><Grip /><Grip /></Grips>
        <HScroll>
          <HEnd><Tri d="l" /></HEnd>
          <HThumb />
          <Spacer />
          <HEnd><Tri d="r" /></HEnd>
        </HScroll>
      </TabBar>
      <Status>
        <StatusText $ml={9} $w={62}>Ready</StatusText>
        <Macro />
        <Slot $w={20} $ml={22}><A11yIcon /></Slot>
        <StatusText $ml={2}>Accessibility: Good to go</StatusText>
        <Spacer />
        <ViewBtn $on><NormalView /></ViewBtn>
        <ViewBtn><LayoutView /></ViewBtn>
        <ViewBtn><BreakView /></ViewBtn>
        <Slot $w={22}><ZoomSign /></Slot>
        <Slider><SliderLine /><SliderTick /><SliderThumb /></Slider>
        <Slot $w={21}><ZoomSign plus /></Slot>
        <Pct>160%</Pct>
      </Status>
      <Strip />
      <Logo>
        <LogoShape />
        <LogoWord>YUNO</LogoWord>
        <LogoSub>LEARNING</LogoSub>
      </Logo>
    </Window>
  );
}
